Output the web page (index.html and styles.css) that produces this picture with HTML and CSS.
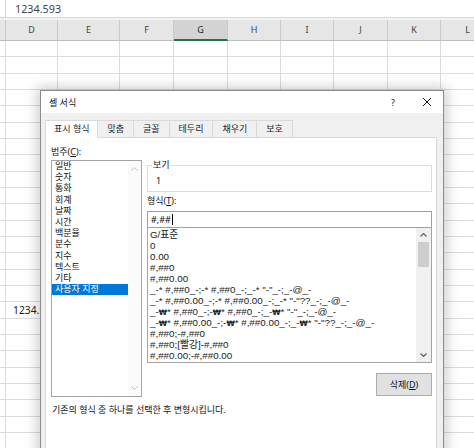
FILE: index.html
```html
<!DOCTYPE html>
<html lang="ko">
<head>
<meta charset="utf-8">
<title>셀 서식</title>
<link rel="stylesheet" href="styles.css">
</head>
<body>
<div class="fbar">
  <div class="fbar-gap"></div>
  <div class="fbar-text">1234.593</div>
</div>
<div class="band"></div>
<div class="sheet">
  <div class="col w-c"><div class="hd"></div><div class="cells"></div></div>
  <div class="col w-d"><div class="hd">D</div><div class="cells"><div class="val">1234.593</div></div></div>
  <div class="col w-e"><div class="hd">E</div><div class="cells"></div></div>
  <div class="col w-f"><div class="hd">F</div><div class="cells"></div></div>
  <div class="col w-g"><div class="hd sel">G</div><div class="cells"></div></div>
  <div class="col w-h"><div class="hd">H</div><div class="cells"></div></div>
  <div class="col w-i"><div class="hd">I</div><div class="cells"></div></div>
  <div class="col w-j"><div class="hd">J</div><div class="cells"></div></div>
  <div class="col w-k"><div class="hd">K</div><div class="cells"></div></div>
  <div class="col w-l"><div class="hd">L</div><div class="cells"></div></div>
</div>

<div class="dialog">
  <div class="titlebar">
    <span class="title">셀 서식</span>
    <span class="help">?</span>
    <span class="close"><svg width="10" height="10" viewBox="0 0 10 10"><path d="M1 1L9 9M9 1L1 9" stroke="#111" stroke-width="1"/></svg></span>
  </div>
  <div class="dbody">
    <div class="tabs">
      <div class="tab active">표시 형식</div>
      <div class="tab">맞춤</div>
      <div class="tab">글꼴</div>
      <div class="tab">테두리</div>
      <div class="tab">채우기</div>
      <div class="tab">보호</div>
    </div>
    <div class="panel">
      <div class="top">
        <div class="left">
          <div class="label">범주(<u>C</u>):</div>
          <div class="catlist">
            <div class="catitems">
              <div>일반</div>
              <div>숫자</div>
              <div>통화</div>
              <div>회계</div>
              <div>날짜</div>
              <div>시간</div>
              <div>백분율</div>
              <div>분수</div>
              <div>지수</div>
              <div>텍스트</div>
              <div>기타</div>
              <div class="sel">사용자 지정</div>
            </div>
            <div class="vscroll">
              <svg width="7" height="4" viewBox="0 0 7 4"><path d="M0.5 3.5L3.5 0.5L6.5 3.5" fill="none" stroke="#c2c2c2" stroke-width="1"/></svg>
              <svg width="7" height="4" viewBox="0 0 7 4"><path d="M0.5 0.5L3.5 3.5L6.5 0.5" fill="none" stroke="#c2c2c2" stroke-width="1"/></svg>
            </div>
          </div>
        </div>
        <div class="right">
          <fieldset class="sample">
            <legend>보기</legend>
            <div class="sample-val">1</div>
          </fieldset>
          <div class="label lbl-fmt">형식(<u>T</u>):</div>
          <div class="input">#,##<span class="caret"></span></div>
          <div class="fmtlist">
            <div class="fmtitems">
              <div>G/표준</div>
              <div>0</div>
              <div>0.00</div>
              <div>#,##0</div>
              <div>#,##0.00</div>
              <div>_-* #,##0_-;-* #,##0_-;_-* "-"_-;_-@_-</div>
              <div>_-* #,##0.00_-;-* #,##0.00_-;_-* "-"??_-;_-@_-</div>
              <div>_-<span class="won">₩</span>* #,##0_-;-<span class="won">₩</span>* #,##0_-;_-<span class="won">₩</span>* "-"_-;_-@_-</div>
              <div>_-<span class="won">₩</span>* #,##0.00_-;-<span class="won">₩</span>* #,##0.00_-;_-<span class="won">₩</span>* "-"??_-;_-@_-</div>
              <div>#,##0;-#,##0</div>
              <div>#,##0;[빨강]-#,##0</div>
              <div>#,##0.00;-#,##0.00</div>
            </div>
            <div class="fscroll">
              <div class="sbtn"><svg width="7" height="4" viewBox="0 0 7 4"><path d="M0.5 3.5L3.5 0.5L6.5 3.5" fill="none" stroke="#606060" stroke-width="1.2"/></svg></div>
              <div class="thumb"></div>
              <div class="spacer"></div>
              <div class="sbtn"><svg width="7" height="4" viewBox="0 0 7 4"><path d="M0.5 0.5L3.5 3.5L6.5 0.5" fill="none" stroke="#606060" stroke-width="1.2"/></svg></div>
            </div>
          </div>
          <div class="btnrow"><button class="btn">삭제(<u>D</u>)</button></div>
        </div>
      </div>
      <div class="desc">기존의 형식 중 하나를 선택한 후 변형시킵니다.</div>
    </div>
  </div>
</div>
</body>
</html>
```

FILE: styles.css
```css
* { box-sizing: border-box; }

body {
  margin: 0;
  width: 474px;
  height: 448px;
  overflow: hidden;
  background: #fff;
  position: relative;
  font-family: "Noto Sans", "Noto Sans CJK KR", sans-serif;
  color: #000;
}

/* formula bar */
.fbar {
  display: flex;
  height: 18px;
  border-bottom: 1px solid #d6d6d6;
}
.fbar-gap {
  width: 6px;
  border-right: 1px solid #d6d6d6;
}
.fbar-text {
  padding-left: 9px;
  font-size: 10.8px;
  line-height: 17px;
  color: #444;
}
.band {
  height: 2px;
  background: #f3f3f3;
}

/* sheet */
.sheet {
  display: flex;
  height: 428px;
}
.col {
  flex: none;
  display: flex;
  flex-direction: column;
}
.w-c { width: 6px; }
.w-d { width: 52px; }
.w-e { width: 62px; }
.w-f { width: 54px; }
.w-g { width: 54px; }
.w-h { width: 53px; }
.w-i { width: 53px; }
.w-j { width: 54px; }
.w-k { width: 53px; }
.w-l { width: 54px; }

.hd {
  height: 21px;
  background: #e6e6e6;
  border-right: 1px solid #cacaca;
  border-bottom: 1px solid #bdbdbd;
  font-size: 9px;
  line-height: 20px;
  text-align: center;
  color: #444;
}
.hd.sel {
  background: #d3d3d3;
  border-bottom: 2px solid #217346;
  color: #222;
}
.cells {
  flex: 1;
  border-right: 1px solid #dcdcdc;
  background-image: repeating-linear-gradient(to bottom, transparent 0, transparent 15.33px, #dcdcdc 15.33px, #dcdcdc 16.33px);
}
.val {
  margin-top: 262.3px;
  height: 15px;
  line-height: 15px;
  font-size: 10.3px;
  text-align: right;
  padding-right: 0;
  color: #222;
}

/* dialog */
.dialog {
  position: absolute;
  left: 40px;
  top: 90px;
  width: 404px;
  height: 380px;
  background: #f0f0f0;
  border: 1px solid #8c8c8c;
  box-shadow: 0 0 12px 3px rgba(0, 0, 0, 0.2);
  display: flex;
  flex-direction: column;
  font-size: 9px;
}
.titlebar {
  height: 22px;
  background: #fff;
  display: flex;
  align-items: center;
  padding-left: 8px;
}
.title {
  flex: 1;
  font-size: 9px;
  color: #111;
}
.help {
  width: 34px;
  text-align: center;
  font-size: 9px;
  color: #222;
}
.close {
  width: 33px;
  display: flex;
  justify-content: center;
  align-items: center;
}
.dbody {
  flex: 1;
  display: flex;
  flex-direction: column;
  padding: 7px 6px 0 4px;
}
.tabs {
  display: flex;
  height: 17px;
  padding-left: 1px;
}
.tab {
  padding: 0 9px;
  line-height: 16px;
  height: 17px;
  border: 1px solid #d9d9d9;
  border-bottom: none;
  margin-left: -1px;
  background: #f0f0f0;
  color: #222;
  white-space: nowrap;
}
.tab.active {
  background: #fff;
  height: 18px;
  position: relative;
  z-index: 1;
  padding: 0 8px;
}
.panel {
  flex: 1;
  background: #fff;
  border: 1px solid #d9d9d9;
  padding: 8px 4px 0 5px;
}
.top {
  display: flex;
  gap: 5px;
}
.left {
  width: 91px;
}
.right {
  width: 285px;
  display: flex;
  flex-direction: column;
}
.label {
  line-height: 12px;
  margin-bottom: 2px;
  color: #111;
  white-space: nowrap;
}
.catlist {
  height: 237px;
  border: 1px solid #a4a4a4;
  display: flex;
}
.catitems {
  width: 76px;
  overflow: hidden;
  font-family: "Liberation Sans", "Noto Sans CJK KR", sans-serif;
}
.catitems div {
  line-height: 11.2px;
  height: 11.2px;
  padding-left: 3px;
  white-space: nowrap;
  color: #111;
}
.catitems .sel {
  background: #0078d7;
  color: #fff;
}
.vscroll {
  flex: 1;
  display: flex;
  flex-direction: column;
  justify-content: space-between;
  align-items: center;
  padding: 6px 0;
  background: #fafafa;
}

.sample {
  margin: 13px 0 0 0;
  padding: 0 4px 4px 4px;
  border: 1px solid #dcdcdc;
  min-width: 0;
}
.sample legend {
  padding: 0 1px;
  line-height: 12px;
  color: #111;
}
.sample-val {
  margin-top: 4px;
  padding-left: 4px;
  line-height: 12px;
  color: #111;
}
.lbl-fmt {
  margin-top: 3px;
  margin-bottom: 4px;
}
.input {
  height: 17px;
  border: 1px solid #a0a0a0;
  padding-left: 3px;
  line-height: 15px;
  display: flex;
  align-items: center;
  color: #111;
}
.caret {
  display: inline-block;
  width: 1px;
  height: 11px;
  background: #000;
  margin-left: 1px;
}
.fmtlist {
  height: 135px;
  border: 1px solid #a4a4a4;
  border-top: none;
  display: flex;
}
.fmtitems {
  flex: 1;
  overflow: hidden;
  padding-top: 1px;
  font-family: "Liberation Sans", "Noto Sans CJK KR", sans-serif;
  font-size: 9.8px;
}
.fmtitems div {
  line-height: 11px;
  height: 11px;
  padding-left: 2px;
  white-space: nowrap;
  color: #222;
}
.won {
  font-family: "DejaVu Sans", "Noto Sans CJK KR", sans-serif;
  font-size: 7.5px;
  font-weight: bold;
}
.fscroll {
  width: 15px;
  background: #f0f0f0;
  display: flex;
  flex-direction: column;
  align-items: center;
}
.sbtn {
  height: 14px;
  width: 100%;
  display: flex;
  align-items: center;
  justify-content: center;
}
.thumb {
  width: 11px;
  height: 25px;
  background: #cdcdcd;
}
.spacer {
  flex: 1;
}
.btnrow {
  display: flex;
  justify-content: flex-end;
  margin-top: 10px;
}
.btn {
  width: 56px;
  height: 23px;
  background: #e1e1e1;
  border: 1px solid #adadad;
  font-family: inherit;
  font-size: 9px;
  color: #111;
  padding: 0;
}
.desc {
  margin-top: 7px;
  padding-left: 1px;
  line-height: 12px;
  color: #111;
}
```
